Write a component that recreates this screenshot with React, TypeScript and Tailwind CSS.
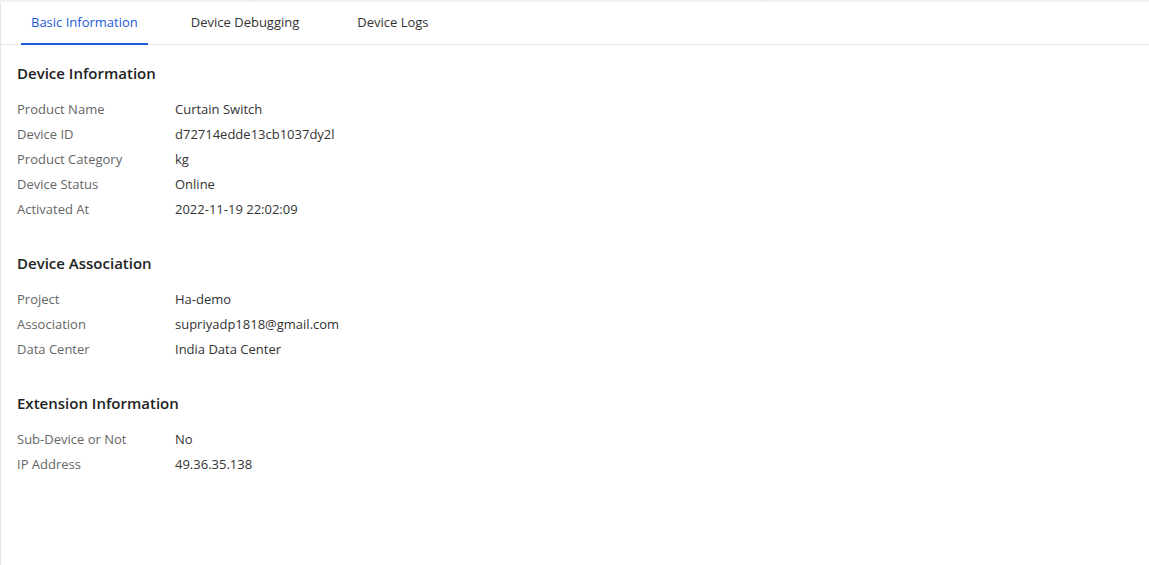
const sections = [
  {
    title: 'Device Information',
    rows: [
      ['Product Name', 'Curtain Switch'],
      ['Device ID', 'd72714edde13cb1037dy2l'],
      ['Product Category', 'kg'],
      ['Device Status', 'Online'],
      ['Activated At', '2022-11-19 22:02:09'],
    ],
  },
  {
    title: 'Device Association',
    rows: [
      ['Project', 'Ha-demo'],
      ['Association', 'supriyadp1818@gmail.com'],
      ['Data Center', 'India Data Center'],
    ],
  },
  {
    title: 'Extension Information',
    rows: [
      ['Sub-Device or Not', 'No'],
      ['IP Address', '49.36.35.138'],
    ],
  },
]

export default function App() {
  return (
    <div className="h-[565px] w-full bg-white font-['Open_Sans',sans-serif] overflow-hidden">
      <div className="h-[3px] bg-gradient-to-b from-[#ececec] to-white" />
      <div className="h-[562px] border-l border-[#e6e6e6]">
        <div className="flex h-[42px] border-b border-[#e8e8e8] pl-5 text-[13px]">
          <div className="flex items-center border-b-2 border-[#1d5bd6] px-[10px] pb-[1px] text-[#1d5bd6] -mb-px">
            Basic Information
          </div>
          <div className="flex items-center px-[10px] pb-[2px] ml-[33px] text-[#333]">Device Debugging</div>
          <div className="flex items-center px-[10px] pb-[2px] ml-[38px] text-[#333]">Device Logs</div>
        </div>
        <div className="pl-4 pt-[17px]">
          {sections.map((s) => (
            <div key={s.title} className="mb-[30px]">
              <h2 className="text-[15px] font-semibold text-[#222] leading-[22px] mb-[13px]">{s.title}</h2>
              {s.rows.map(([k, v]) => (
                <div key={k} className="flex h-[25px] items-center text-[13px]">
                  <span className="w-[158px] text-[#666]">{k}</span>
                  <span className="text-[#333]">{v}</span>
                </div>
              ))}
            </div>
          ))}
        </div>
      </div>
    </div>
  )
}
